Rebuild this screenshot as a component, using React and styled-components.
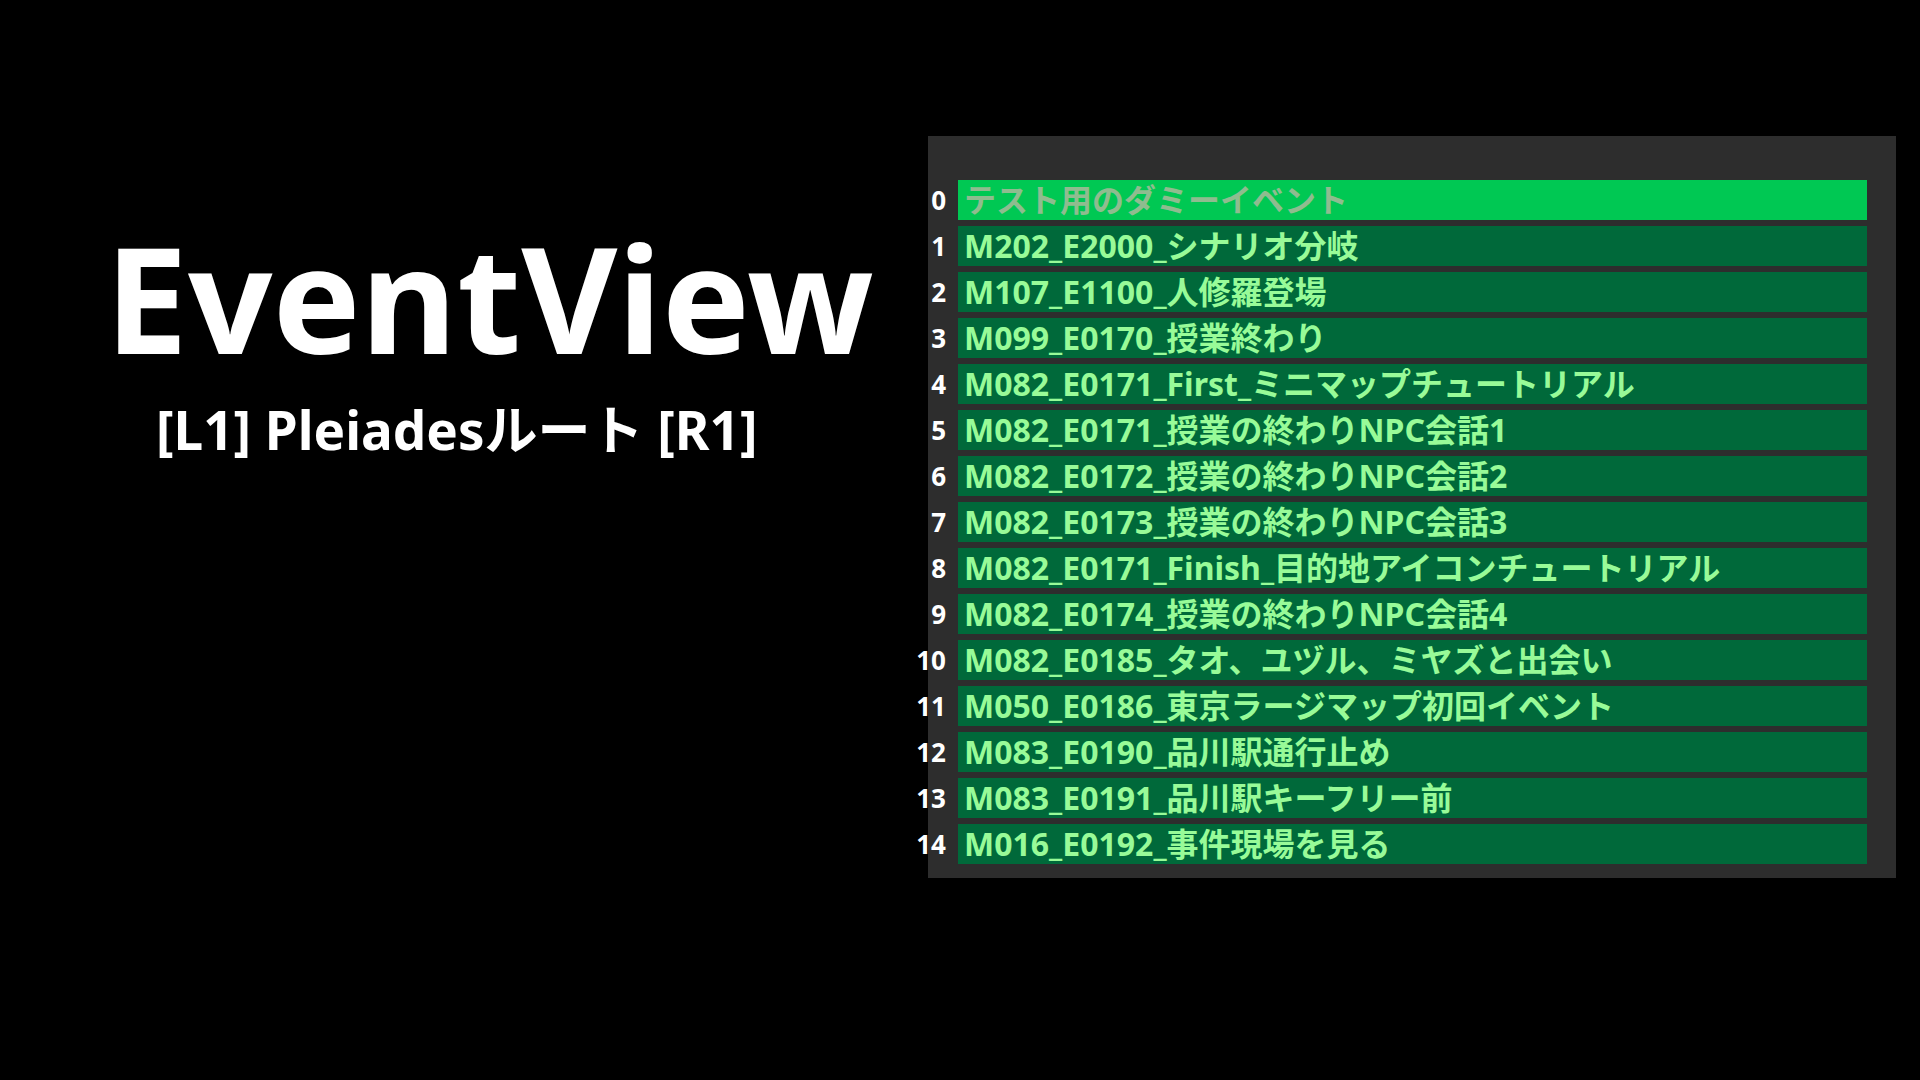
import React from "react";
import styled, { createGlobalStyle } from "styled-components";

const GlobalStyle = createGlobalStyle`
  html, body {
    margin: 0;
    padding: 0;
    background: #000;
  }
  body {
    font-family: "Noto Sans", "Noto Sans CJK JP", sans-serif;
  }
`;

const Screen = styled.div`
  width: 1920px;
  height: 1080px;
  background: #000;
  display: flex;
  align-items: flex-start;
  overflow: hidden;
`;

const TitleBlock = styled.div`
  width: 928px;
  padding-top: 223px;
  display: flex;
  flex-direction: column;
  align-items: flex-start;
  box-sizing: border-box;
`;

const Title = styled.h1`
  margin: 0 0 0 105px;
  font-size: 148px;
  line-height: 1;
  font-weight: 700;
  color: #fff;
`;

const Subtitle = styled.div`
  margin: 32px 0 0 156px;
  font-size: 53px;
  line-height: 1;
  font-weight: 700;
  color: #fff;
  white-space: nowrap;
`;

const Panel = styled.div`
  margin-top: 136px;
  width: 968px;
  height: 742px;
  box-sizing: border-box;
  background: #2d2d2d;
  padding: 44px 29px 0 0;
  display: flex;
  flex-direction: column;
  gap: 6px;
`;

const Row = styled.div`
  display: flex;
  align-items: center;
  height: 40px;
`;

const Index = styled.div`
  width: 30px;
  flex-shrink: 0;
  padding-right: 12px;
  box-sizing: border-box;
  display: flex;
  justify-content: flex-end;
  font-size: 26px;
  line-height: 40px;
  font-weight: 700;
  color: #fff;
  white-space: nowrap;
`;

const Bar = styled.div`
  flex: 1;
  height: 40px;
  display: flex;
  align-items: center;
  padding-left: 6px;
  background: ${({ $active }) => ($active ? "#00c853" : "#00693a")};
  color: ${({ $active }) => ($active ? "#8fbc8f" : "#98fb98")};
  font-size: 32px;
  line-height: 40px;
  font-weight: 700;
  white-space: nowrap;
`;

const events = [
  "テスト用のダミーイベント",
  "M202_E2000_シナリオ分岐",
  "M107_E1100_人修羅登場",
  "M099_E0170_授業終わり",
  "M082_E0171_First_ミニマップチュートリアル",
  "M082_E0171_授業の終わりNPC会話1",
  "M082_E0172_授業の終わりNPC会話2",
  "M082_E0173_授業の終わりNPC会話3",
  "M082_E0171_Finish_目的地アイコンチュートリアル",
  "M082_E0174_授業の終わりNPC会話4",
  "M082_E0185_タオ、ユヅル、ミヤズと出会い",
  "M050_E0186_東京ラージマップ初回イベント",
  "M083_E0190_品川駅通行止め",
  "M083_E0191_品川駅キーフリー前",
  "M016_E0192_事件現場を見る",
];

export default function App() {
  const selected = 0;
  return (
    <>
      <GlobalStyle />
      <Screen>
        <TitleBlock>
          <Title>EventView</Title>
          <Subtitle>[L1] Pleiadesルート [R1]</Subtitle>
        </TitleBlock>
        <Panel>
          {events.map((name, i) => (
            <Row key={i}>
              <Index>{i}</Index>
              <Bar $active={i === selected}>{name}</Bar>
            </Row>
          ))}
        </Panel>
      </Screen>
    </>
  );
}
